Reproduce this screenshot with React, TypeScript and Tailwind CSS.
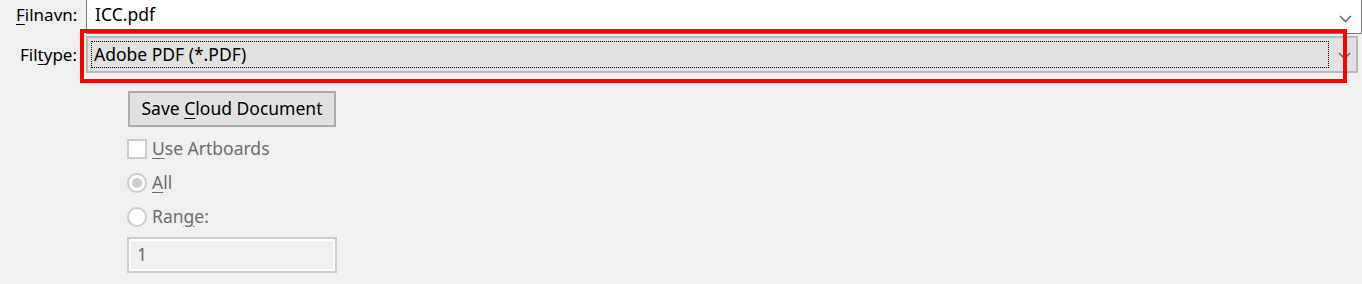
import React from "react";

const Chevron = () => (
  <svg width="13" height="8" viewBox="0 0 13 8" className="block">
    <polyline points="1,1 6.5,6.5 12,1" fill="none" stroke="#6b6b6b" strokeWidth="1.6" />
  </svg>
);

export default function App() {
  return (
    <div
      className="relative w-[1362px] h-[284px] bg-[#f0f0f0] overflow-hidden text-[17.5px] text-black"
      style={{ fontFamily: '"Noto Sans", "Open Sans", "Liberation Sans", sans-serif' }}
    >
      {/* Filnavn row */}
      <div className="flex h-[34px]">
        <div className="w-[86px] pl-[16px] flex items-center leading-none pb-[5px] text-[17px]">
          <span>
            <span className="underline underline-offset-[3px]">F</span>ilnavn:
          </span>
        </div>
        <div className="flex-1 bg-white border-l border-r border-b border-[#7a7a7a] flex items-center justify-between pl-[8px] pr-[9px] pb-[4px]">
          <span className="leading-none">ICC.pdf</span>
          <span className="pt-[8px]">
            <Chevron />
          </span>
        </div>
      </div>

      {/* Filtype row */}
      <div className="flex h-[37px] mt-[2px]">
        <div className="w-[86px] pl-[20px] flex items-center leading-none text-[17px]">
          <span>
            Fil<span className="underline underline-offset-[3px]">t</span>ype:
          </span>
        </div>
        <div className="w-[1272px] bg-[#e1e1e1] border-2 border-[#b9b9b9] flex items-center pl-[3px] pr-[4px]">
          <div className="w-[1238px] h-[27px] border border-dotted border-black flex items-center pl-[2px] leading-none">
            Adobe PDF (*.PDF)
          </div>
          <div className="flex-1 flex justify-end pr-[1px] pt-[2px]">
            <Chevron />
          </div>
        </div>
      </div>

      {/* Options */}
      <div className="flex flex-col items-start pl-[128px]">
        <button className="mt-[18px] w-[208px] h-[36px] bg-[#e1e1e1] border-2 border-[#adadad] flex items-center justify-center leading-none">
          <span>
            Save <span className="underline underline-offset-[3px]">C</span>loud Document
          </span>
        </button>

        <div className="mt-[12px] flex items-center h-[20px] -ml-[1px]">
          <div className="w-[20px] h-[20px] bg-white border-2 border-[#cccccc]" />
          <span className="ml-[5px] text-[#6d6d6d] leading-none">
            <span className="underline underline-offset-[3px]">U</span>se Artboards
          </span>
        </div>

        <div className="mt-[14px] flex items-center h-[20px] -ml-[1px]">
          <div className="w-[20px] h-[20px] rounded-full border-2 border-[#cccccc] bg-white flex items-center justify-center">
            <div className="w-[10px] h-[10px] rounded-full bg-[#cccccc]" />
          </div>
          <span className="ml-[5px] text-[#6d6d6d] leading-none">
            <span className="underline underline-offset-[3px]">A</span>ll
          </span>
        </div>

        <div className="mt-[14px] flex items-center h-[20px] -ml-[1px]">
          <div className="w-[20px] h-[20px] rounded-full border-2 border-[#cccccc] bg-white" />
          <span className="ml-[5px] text-[#6d6d6d] leading-none">
            Ran<span className="underline underline-offset-[3px]">g</span>e:
          </span>
        </div>

        <div className="mt-[10px] -ml-[1px] w-[210px] h-[36px] border-2 border-[#cccccc]">
          <div className="w-full h-full border-2 border-white bg-[#f0f0f0] flex items-center pl-[6px] text-[#6d6d6d] leading-none">
            1
          </div>
        </div>
      </div>

      {/* Red highlight annotation */}
      <div className="absolute left-[80px] top-[29px] w-[1267px] h-[54px] border-[4px] border-[#ff0000] pointer-events-none" />
    </div>
  );
}
